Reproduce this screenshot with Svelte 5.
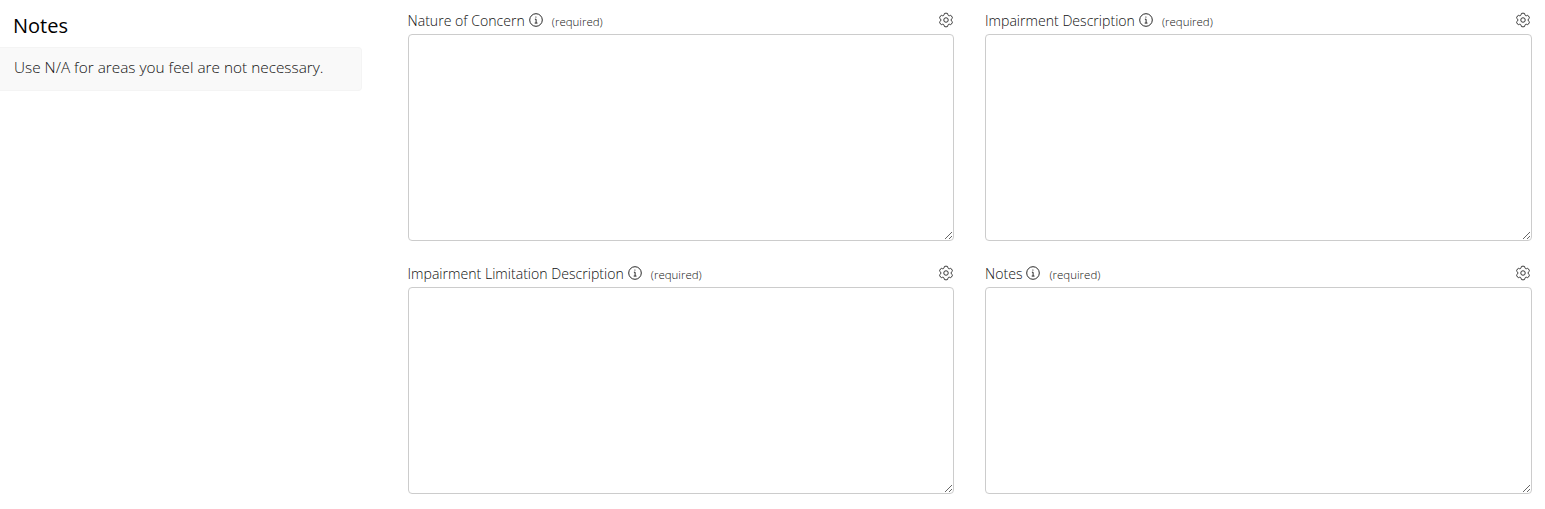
<script>
  const fields = [
    { label: 'Nature of Concern' },
    { label: 'Impairment Description' },
    { label: 'Impairment Limitation Description' },
    { label: 'Notes' }
  ];
</script>

<div class="page">
  <aside class="side">
    <h2>Notes</h2>
    <p class="hint">Use N/A for areas you feel are not necessary.</p>
  </aside>

  <main class="fields">
    {#each fields as field}
      <div class="field">
        <div class="head">
          <label for={field.label}>{field.label}</label>
          <svg class="info" width="14" height="14" viewBox="0 0 14 14" fill="none" stroke="currentColor" stroke-width="0.9">
            <circle cx="7" cy="7" r="6.3"></circle>
            <path d="M5.9 6.2H7.1V10M5.7 10.1H8.5"></path>
            <circle cx="6.9" cy="4" r="0.6" fill="currentColor" stroke="none"></circle>
          </svg>
          <span class="req">(required)</span>
          <button class="gear" type="button" aria-label="Settings">
            <svg width="18" height="18" viewBox="0 0 24 24" fill="none" stroke="currentColor" stroke-width="1.2" stroke-linejoin="round">
              <path d="M9.594 3.94c.09-.542.56-.94 1.11-.94h2.593c.55 0 1.02.398 1.11.94l.213 1.281c.063.374.313.686.645.87.074.04.147.083.22.127.325.196.72.257 1.075.124l1.217-.456a1.125 1.125 0 0 1 1.37.49l1.296 2.247a1.125 1.125 0 0 1-.26 1.431l-1.003.827c-.293.241-.438.613-.43.992a7.723 7.723 0 0 1 0 .255c-.008.378.137.75.43.991l1.004.827c.424.35.534.955.26 1.43l-1.298 2.247a1.125 1.125 0 0 1-1.369.491l-1.217-.456c-.355-.133-.75-.072-1.076.124a6.47 6.47 0 0 1-.22.128c-.331.183-.581.495-.644.869l-.213 1.281c-.09.543-.56.94-1.11.94h-2.594c-.55 0-1.019-.398-1.11-.94l-.213-1.281c-.062-.374-.312-.686-.644-.87a6.52 6.52 0 0 1-.22-.127c-.325-.196-.72-.257-1.076-.124l-1.217.456a1.125 1.125 0 0 1-1.369-.49l-1.297-2.247a1.125 1.125 0 0 1 .26-1.431l1.004-.827c.292-.24.437-.613.43-.991a6.932 6.932 0 0 1 0-.255c.007-.38-.138-.751-.43-.992l-1.004-.827a1.125 1.125 0 0 1-.26-1.43l1.297-2.247a1.125 1.125 0 0 1 1.37-.491l1.216.456c.356.133.751.072 1.076-.124.072-.044.146-.086.22-.128.332-.183.582-.495.644-.869l.214-1.28Z"></path>
              <circle cx="12" cy="12" r="3"></circle>
            </svg>
          </button>
        </div>
        <textarea id={field.label}></textarea>
      </div>
    {/each}
  </main>
</div>

<style>
  :global(body) {
    margin: 0;
    background: #fff;
    font-family: "Open Sans", "Noto Sans", sans-serif;
    color: #222;
  }

  .page {
    display: grid;
    grid-template-columns: 362px 1fr;
    column-gap: 45.5px;
    padding-right: 13.5px;
    height: 509px;
    box-sizing: border-box;
  }

  h2 {
    margin: 0;
    padding: 12px 0 0 13px;
    height: 47px;
    box-sizing: border-box;
    font-size: 20px;
    line-height: 27px;
    font-weight: 400;
    color: #000;
  }

  .hint {
    margin: 0;
    height: 44px;
    padding: 0 14px;
    box-sizing: border-box;
    background: #f9f9f9;
    border: 1px solid #f4f4f4;
    border-left: none;
    border-radius: 0 4px 4px 0;
    font-size: 15.35px;
    font-weight: 300;
    line-height: 38px;
    color: #111;
  }

  .fields {
    display: grid;
    grid-template-columns: 1fr 1fr;
    column-gap: 31px;
    row-gap: 19px;
    align-content: start;
    padding-top: 7px;
  }

  .field {
    display: flex;
    flex-direction: column;
    min-width: 0;
  }

  .head {
    display: flex;
    align-items: center;
    height: 27px;
    padding-bottom: 1px;
    box-sizing: border-box;
  }

  label {
    font-size: 14.1px;
    font-weight: 300;
    color: #111;
  }

  .info {
    margin-left: 4px;
    color: #111;
  }

  .req {
    margin-left: 9px;
    font-size: 11.5px;
    font-weight: 300;
    color: #111;
    padding-top: 2px;
  }

  .gear {
    margin-left: auto;
    margin-right: -0.5px;
    padding: 0;
    border: none;
    background: none;
    display: flex;
    color: #222;
  }

  textarea {
    display: block;
    width: 100%;
    height: 207px;
    box-sizing: border-box;
    border: 1px solid #ccc;
    border-radius: 4px;
    background: #fff;
    outline: none;
    margin: 0;
  }
</style>
